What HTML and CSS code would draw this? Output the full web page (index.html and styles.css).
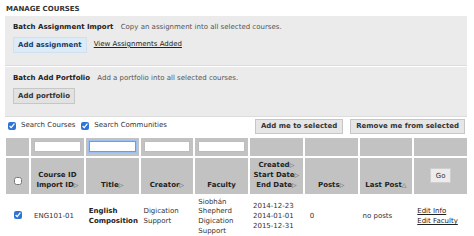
FILE: index.html
```html
<!DOCTYPE html>
<html lang="en">
<head>
  <meta charset="UTF-8">
  <title>Manage Courses</title>
  <link rel="stylesheet" href="styles.css">
</head>
<body>
  <h1 class="titulo">MANAGE COURSES</h1>

  <div class="panel">
    <div class="panel-cab">
      <strong>Batch Assignment Import</strong>
      <span>Copy an assignment into all selected courses.</span>
    </div>
    <div class="panel-acciones">
      <button class="btn btn-azul">Add assignment</button>
      <a href="#" class="enlace">View Assignments Added</a>
    </div>
  </div>

  <div class="panel">
    <div class="panel-cab">
      <strong>Batch Add Portfolio</strong>
      <span>Add a portfolio into all selected courses.</span>
    </div>
    <div class="panel-acciones">
      <button class="btn">Add portfolio</button>
    </div>
  </div>

  <div class="busqueda">
    <label class="check"><input type="checkbox" checked> Search Courses</label>
    <label class="check"><input type="checkbox" checked> Search Communities</label>
    <div class="busqueda-botones">
      <button class="btn">Add me to selected</button>
      <button class="btn">Remove me from selected</button>
    </div>
  </div>

  <table class="cursos">
    <colgroup>
      <col class="c-check">
      <col><col><col><col><col><col><col><col>
    </colgroup>
    <thead>
      <tr class="filtros">
        <th></th>
        <th><input type="text"></th>
        <th><input type="text" class="foco"></th>
        <th><input type="text"></th>
        <th><input type="text"></th>
        <th></th>
        <th></th>
        <th></th>
        <th></th>
      </tr>
      <tr class="columnas">
        <th><input type="checkbox" class="check-blanco"></th>
        <th>Course ID<br>Import ID<i>▷</i></th>
        <th>Title<i>▷</i></th>
        <th>Creator<i>▷</i></th>
        <th>Faculty</th>
        <th>Created<i>▷</i><br>Start Date<i>▷</i><br>End Date<i>▷</i></th>
        <th>Posts<i>▷</i></th>
        <th>Last Post<i>△</i></th>
        <th class="col-go"><button class="btn btn-go">Go</button></th>
      </tr>
    </thead>
    <tbody>
      <tr>
        <td class="centro"><input type="checkbox" checked></td>
        <td>ENG101-01</td>
        <td><strong>English Composition</strong></td>
        <td>Digication Support</td>
        <td>Siobhán Shepherd Digication Support</td>
        <td>2014-12-23<br>2014-01-01<br>2015-12-31</td>
        <td class="num">0</td>
        <td>no posts</td>
        <td><a href="#" class="enlace">Edit Info</a><br><a href="#" class="enlace">Edit Faculty</a></td>
      </tr>
    </tbody>
  </table>
</body>
</html>
```

FILE: styles.css
```css
body {
  font-family: 'DejaVu Sans', Verdana, sans-serif;
  font-size: 7px;
  line-height: 1.4;
  color: #333;
  background: #fff;
  margin: 0;
  padding: 0 7px 0 5px;
}

.titulo {
  font-size: 7px;
  font-weight: bold;
  margin: 0;
  padding: 4px 1px 2px;
  height: 10px;
  line-height: 10px;
  color: #333;
}

.panel {
  background: #ebebeb;
  padding: 7px 8px 12px;
  border-bottom: 1px solid #dcdcdc;
  margin-bottom: 1px;
}

.panel-cab strong {
  color: #222;
  margin-right: 5px;
}

.panel-cab span {
  color: #555;
}

.panel-acciones {
  display: flex;
  align-items: center;
  gap: 7px;
  margin-top: 4px;
}

.btn {
  font-family: inherit;
  font-size: 7px;
  font-weight: bold;
  color: #333;
  background: #e2e2e2;
  border: 1px solid #c6c6c6;
  height: 16px;
  padding: 0 4px;
  cursor: pointer;
}

.btn-azul {
  background: #dcebf8;
  border-color: #d0e0ef;
  color: #1d3a66;
}

.enlace {
  color: #222;
  text-decoration: underline;
}

.busqueda {
  display: flex;
  align-items: center;
  margin-top: 2px;
  padding-left: 3px;
  height: 15px;
}

.check {
  display: flex;
  align-items: center;
  gap: 5px;
  margin-right: 6px;
  color: #333;
}

input[type='checkbox'] {
  width: 8px;
  height: 8px;
  margin: 0;
  accent-color: #2e74d6;
}

.busqueda-botones {
  margin-left: auto;
  display: flex;
  gap: 7px;
  padding-right: 2px;
}

.busqueda-botones .btn {
  height: 15px;
  padding: 0 5px;
  background: #e6e6e6;
}

.cursos {
  margin-top: 2px;
  width: 465px;
  border-collapse: separate;
  border-spacing: 2px;
  table-layout: fixed;
  margin-left: -1px;
}

.c-check {
  width: 23px;
}

.cursos th {
  background: #c2c2c2;
  color: #222;
  font-weight: bold;
  text-align: center;
  vertical-align: bottom;
  white-space: nowrap;
  padding: 0 2px 3px;
}

.cursos th i {
  font-style: normal;
  font-weight: normal;
  font-size: 6px;
  color: #555;
}

.filtros th {
  height: 18px;
  padding: 0 3px;
  vertical-align: middle;
}

.filtros input {
  display: block;
  width: 100%;
  box-sizing: border-box;
  height: 11px;
  border: 1px solid #bdbdbd;
  padding: 0;
  background: #fff;
}

.filtros input.foco {
  border: 1px solid #6b9de0;
  box-shadow: 0 0 0 1px #9cc0ef;
}

.columnas th {
  height: 31px;
}

.check-blanco {
  accent-color: #fff;
}

.columnas th:first-child {
  padding-bottom: 5px;
}

.col-go {
  vertical-align: middle !important;
  padding: 0 !important;
}

.btn-go {
  height: 15px;
  padding: 0 5px;
  font-weight: normal;
  background: #ececec;
  border-color: #cfcfcf;
}

.cursos td {
  padding: 2px 3px;
  vertical-align: middle;
  color: #333;
}

.cursos td strong {
  color: #222;
}

.centro {
  text-align: center;
}

.num {
  padding-left: 5px !important;
}
```
